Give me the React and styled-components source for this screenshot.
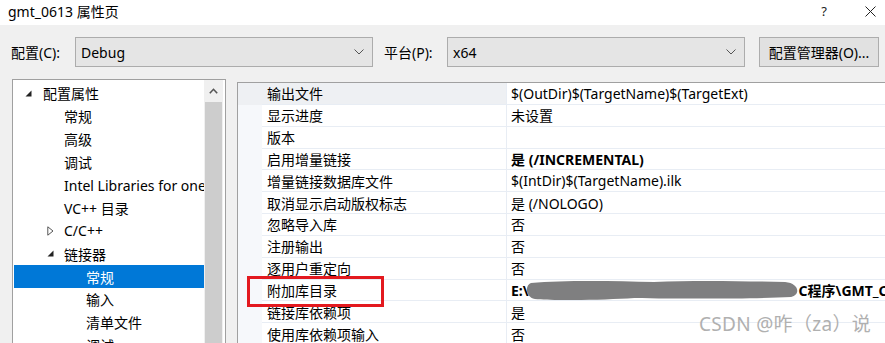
import React from "react";
import styled, { createGlobalStyle } from "styled-components";

const Global = createGlobalStyle`
  html, body { margin: 0; padding: 0; }
  body {
    width: 885px; height: 343px; overflow: hidden;
    font-family: "Noto Sans", "Noto Sans CJK SC", sans-serif;
    font-size: 14px; color: #000; background: #f0f0f0;
  }
  * { box-sizing: border-box; }
`;

const Window = styled.div`
  position: relative;
  width: 885px; height: 343px; overflow: hidden;
  background: #f0f0f0;
  display: flex; flex-direction: column;
`;

const TitleBar = styled.div`
  height: 25px; flex: none; background: #fff;
  display: flex; align-items: center; padding-left: 8px;
`;
const Title = styled.div`
  flex: 1; font-size: 14px; line-height: 25px; margin-top: -2px;
`;
const TitleBtn = styled.div`
  width: ${p => p.$w}px; display: flex; align-items: center; justify-content: center;
  font-size: 13px; color: #222; height: 25px; margin-top: -3px;
`;

const ConfigRow = styled.div`
  display: flex; align-items: center; height: 30px; margin-top: 12px;
  padding-left: 11px;
`;
const Label = styled.span`
  width: ${p => p.$w}px; flex: none; white-space: nowrap; font-size: 14px;
`;
const Combo = styled.div`
  width: 298px; height: 30px; flex: none;
  background: #e5e5e5; border: 1px solid #acacac;
  display: flex; align-items: center; padding-left: 5px; padding-right: 8px;
  margin-right: ${p => p.$mr}px;
`;
const ComboText = styled.span` flex: 1; font-size: 14px; `;
const Button = styled.div`
  width: 120px; height: 30px; flex: none;
  background: #e1e1e1; border: 1px solid #adadad;
  display: flex; align-items: center; justify-content: center; font-size: 14px;
`;

const Main = styled.div`
  flex: 1; display: flex; gap: 11px; margin-top: 12px; padding-left: 12px;
  min-height: 0;
`;
const TreePanel = styled.div`
  width: 214px; flex: none; height: 300px;
  background: #fff; border: 1px solid #a0a0a0;
  display: flex; padding-right: 2px;
`;
const TreeList = styled.div`
  flex: 1; min-width: 0; padding: 2px 0 0 1px; display: flex; flex-direction: column;
  overflow: hidden;
`;
const TreeItem = styled.div`
  height: 22.9px; flex: none; display: flex; align-items: center;
  white-space: nowrap; overflow: hidden;
  padding-left: ${p => p.$indent}px;
  background: ${p => (p.$sel ? "#0078d7" : "transparent")};
  color: ${p => (p.$sel ? "#fff" : "#000")};
  font-size: 14px;
`;
const Twisty = styled.span`
  width: ${p => p.$w}px; flex: none; display: inline-flex; align-items: center;
`;
const ScrollBar = styled.div`
  width: 19px; flex: none; background: #f0f0f0; display: flex; flex-direction: column;
`;
const ScrollArrow = styled.div`
  height: 22px; display: flex; align-items: center; justify-content: center;
`;
const ScrollThumb = styled.div`
  flex: 1; margin: 0 1px; background: #cdcdcd;
`;

const GridPanel = styled.div`
  flex: 1; margin-top: 3px; background: #fff;
  border-left: 1px solid #a0a0a0; border-top: 1px solid #a0a0a0;
  display: flex; flex-direction: column; overflow: hidden;
`;
const Row = styled.div`
  position: relative;
  display: grid; grid-template-columns: 24px 245px 1fr;
  height: 21.85px; flex: none;
`;
const Gutter = styled.div`
  background: ${p => (p.$first ? "#eef0f3" : "#f6f8fb")};
`;
const NameCell = styled.div`
  background: ${p => (p.$first ? "#eef0f3" : "#fff")};
  border-bottom: 1px solid #e8edf4; border-right: 1px solid #e8edf4;
  padding-left: 5px; display: flex; align-items: center; white-space: nowrap;
  font-size: 14px;
`;
const ValueCell = styled.div`
  border-bottom: 1px solid #e8edf4;
  padding-left: 4px; display: flex; align-items: center; white-space: nowrap;
  font-weight: ${p => (p.$bold ? 700 : 400)}; font-size: 14px; overflow: hidden;
`;
const Highlight = styled.div`
  position: absolute; z-index: 2; left: 9px; top: -4px; width: 137px; height: 31px;
  border: 3px solid #e3191f;
`;
const Redact = styled.svg`
  flex: none; margin: 0 -2px 0 -4px; display: block;
`;
const Watermark = styled.div`
  position: absolute; z-index: 3; right: 14px; bottom: 6px;
  font-size: 19px; color: #b0b0b0; letter-spacing: 0.3px;
  font-family: "Noto Sans", "Noto Sans CJK SC", sans-serif;
`;

const Chevron = () => (
  <svg width="10" height="6" viewBox="0 0 10 6">
    <path d="M0.5 0.5 L5 5 L9.5 0.5" fill="none" stroke="#555" strokeWidth="1" />
  </svg>
);

const Expanded = () => (
  <svg width="7" height="7" viewBox="0 0 7 7">
    <path d="M6.5 0.5 L6.5 6.5 L0.5 6.5 Z" fill="#222" />
  </svg>
);
const Collapsed = () => (
  <svg width="7" height="10" viewBox="0 0 7 10">
    <path d="M0.8 0.8 L6 5 L0.8 9.2 Z" fill="#fff" stroke="#555" strokeWidth="1" />
  </svg>
);

const tree = [
  { t: "配置属性", indent: 11, twisty: "e", tw: 18 },
  { t: "常规", indent: 50 },
  { t: "高级", indent: 50 },
  { t: "调试", indent: 50 },
  { t: "Intel Libraries for oneAPI", indent: 50 },
  { t: "VC++ 目录", indent: 50 },
  { t: "C/C++", indent: 33, twisty: "c", tw: 17 },
  { t: "链接器", indent: 33, twisty: "e", tw: 17 },
  { t: "常规", indent: 72, sel: true },
  { t: "输入", indent: 72 },
  { t: "清单文件", indent: 72 },
  { t: "调试", indent: 72 },
];

const rows = [
  { n: "输出文件", v: "$(OutDir)$(TargetName)$(TargetExt)", first: true },
  { n: "显示进度", v: "未设置" },
  { n: "版本", v: "" },
  { n: "启用增量链接", v: "是 (/INCREMENTAL)", bold: true },
  { n: "增量链接数据库文件", v: "$(IntDir)$(TargetName).ilk" },
  { n: "取消显示启动版权标志", v: "是 (/NOLOGO)" },
  { n: "忽略导入库", v: "否" },
  { n: "注册输出", v: "否" },
  { n: "逐用户重定向", v: "否" },
  { n: "附加库目录", v: "redact", bold: true, box: true },
  { n: "链接库依赖项", v: "是" },
  { n: "使用库依赖项输入", v: "否" },
];

export default function App() {
  return (
    <>
      <Global />
      <Window>
        <TitleBar>
          <Title>gmt_0613 属性页</Title>
          <TitleBtn $w={22}>?</TitleBtn>
          <TitleBtn $w={20} />
          <TitleBtn $w={30}>
            <svg width="11" height="11" viewBox="0 0 11 11">
              <path d="M0.5 0.5 L10.5 10.5 M10.5 0.5 L0.5 10.5" stroke="#222" strokeWidth="1" />
            </svg>
          </TitleBtn>
        </TitleBar>
        <ConfigRow>
          <Label $w={64}>配置(C):</Label>
          <Combo $mr={11}>
            <ComboText>Debug</ComboText>
            <Chevron />
          </Combo>
          <Label $w={63}>平台(P):</Label>
          <Combo $mr={14}>
            <ComboText>x64</ComboText>
            <Chevron />
          </Combo>
          <Button>配置管理器(O)...</Button>
        </ConfigRow>
        <Main>
          <TreePanel>
            <TreeList>
              {tree.map((it, i) => (
                <TreeItem key={i} $indent={it.indent} $sel={it.sel}>
                  {it.twisty && (
                    <Twisty $w={it.tw}>
                      {it.twisty === "e" ? <Expanded /> : <Collapsed />}
                    </Twisty>
                  )}
                  {it.t}
                </TreeItem>
              ))}
            </TreeList>
            <ScrollBar>
              <ScrollArrow>
                <svg width="9" height="6" viewBox="0 0 9 6">
                  <path d="M0.8 5.2 L4.5 1.3 L8.2 5.2" fill="none" stroke="#555" strokeWidth="1.6" />
                </svg>
              </ScrollArrow>
              <ScrollThumb />
            </ScrollBar>
          </TreePanel>
          <GridPanel>
            {rows.map((r, i) => (
              <Row key={i}>
                <Gutter $first={r.first} />
                <NameCell $first={r.first}>{r.n}</NameCell>
                <ValueCell $bold={r.bold}>
                  {r.v === "redact" ? (
                    <>
                      E:\
                      <Redact width="276" height="22" viewBox="0 0 278 22">
                        <path
                          d="M6 4 C40 1 90 2 130 3 C170 1 220 2 262 3 C276 4 278 16 268 18 C230 20 160 20 110 19 C80 21 30 22 10 20 C0 18 0 6 6 4 Z"
                          fill="#7f7f80"
                        />
                      </Redact>
                      C程序\GMT_C
                    </>
                  ) : (
                    r.v
                  )}
                </ValueCell>
                {r.box && <Highlight />}
              </Row>
            ))}
          </GridPanel>
        </Main>
        <Watermark>CSDN @咋（za）说</Watermark>
      </Window>
    </>
  );
}
